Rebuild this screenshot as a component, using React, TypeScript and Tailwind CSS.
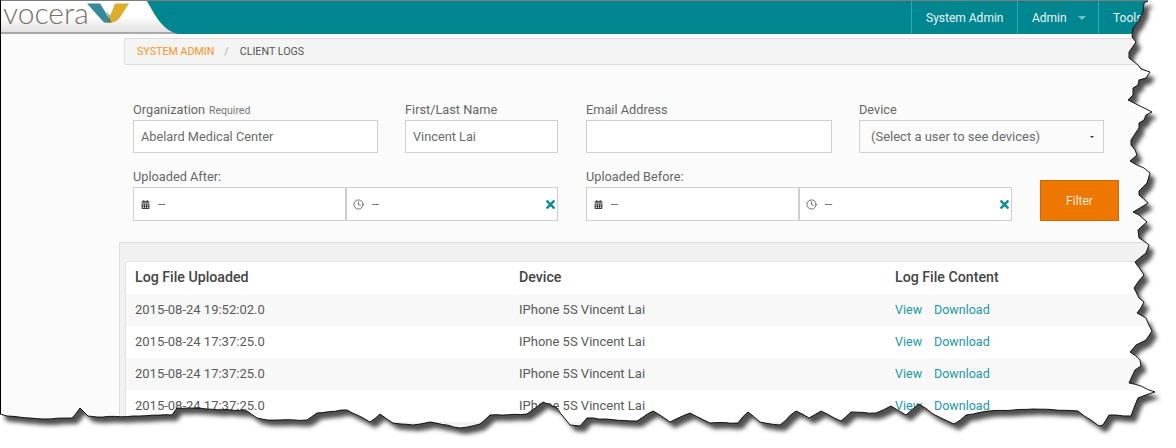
import React from "react";
import { Clock } from "lucide-react";
import { FaCalendarAlt, FaTimes } from "react-icons/fa";

const edge: [number, number][] = [
  [1148,1],[1144,3],[1143,12],[1138,22],[1133,28],[1132,37],[1136,42],[1129,52],[1129,58],[1138,65],[1141,69],[1150,72],[1146,78],[1139,80],[1138,85],[1133,88],[1133,95],[1128,100],[1138,105],[1152,112],[1146,115],[1144,120],[1139,123],[1139,128],[1131,140],[1131,145],[1135,150],[1137,155],[1130,161],[1144,168],[1150,173],[1147,183],[1139,191],[1139,195],[1148,203],[1133,212],[1139,215],[1147,222],[1138,230],[1139,238],[1149,245],[1146,253],[1135,262],[1144,275],[1134,288],[1139,298],[1144,302],[1137,313],[1146,318],[1152,331],[1146,340],[1136,345],[1130,352],[1140,360],[1141,366],[1135,370],[1129,383],[1141,386],[1155,392],[1138,398],[1131,416],[1116,415],[1109,415],[1103,425],[1099,426],[1091,420],[1078,411],[1033,409],[989,411],[966,415],[954,424],[933,414],[919,404],[906,415],[891,406],[876,413],[851,412],[841,421],[821,411],[809,418],[796,411],[780,425],[760,422],[748,412],[738,423],[710,423],[690,413],[670,422],[653,411],[637,421],[587,418],[580,426],[570,425],[557,408],[543,402],[527,414],[490,415],[480,424],[460,428],[430,422],[413,425],[393,423],[380,414],[370,422],[347,410],[317,413],[307,420],[267,420],[257,418],[247,411],[207,409],[177,408],[172,415],[133,416],[97,417],[88,416],[80,408],[72,418],[43,419],[7,416],[0,414],
];

function jagged(points: [number, number][]): string {
  const out: string[] = [];
  let seed = 7;
  const rnd = () => {
    seed = (seed * 9301 + 49297) % 233280;
    return seed / 233280 - 0.5;
  };
  points.forEach((p, i) => {
    out.push(`${p[0]},${p[1]}`);
    const n = points[i + 1];
    if (!n) return;
    const len = Math.hypot(n[0] - p[0], n[1] - p[1]);
    const steps = Math.floor(len / 6);
    for (let s = 1; s < steps; s++) {
      const t = s / steps;
      out.push(`${(p[0] + (n[0] - p[0]) * t + rnd() * 1).toFixed(1)},${(p[1] + (n[1] - p[1]) * t + rnd() * 1).toFixed(1)}`);
    }
  });
  return out.join(" ");
}

function TornEdge() {
  const line = jagged(edge);
  const outside = `1148,0 ${line} 0,448 1176,448 1176,0`;
  const page = `0,0 1148,0 ${line}`;
  return (
    <svg className="absolute left-0 top-0 pointer-events-none" width="1176" height="448" viewBox="0 0 1176 448">
      <defs>
        <filter id="torn-blur" x="-5%" y="-5%" width="110%" height="110%">
          <feGaussianBlur stdDeviation="2" />
        </filter>
        <clipPath id="torn-out">
          <polygon points={outside} />
        </clipPath>
      </defs>
      <polygon points={outside} fill="#ffffff" />
      <g clipPath="url(#torn-out)">
        <polygon points={page} fill="#4f4f4f" filter="url(#torn-blur)" transform="translate(5 6)" />
      </g>
      <polyline points={line} fill="none" stroke="#000" strokeWidth="0.9" />
      <path d="M0 0H1148M0.5 0V414" fill="none" stroke="#000" strokeWidth="1" />
    </svg>
  );
}

function Logo() {
  return (
    <div className="absolute left-0 top-0 w-[180px] h-[33px]">
      <svg className="absolute left-0 top-0" width="180" height="33" viewBox="0 0 180 33">
        <defs>
          <linearGradient id="logo-bg" x1="0" y1="0" x2="0" y2="1">
            <stop offset="0.45" stopColor="#ffffff" />
            <stop offset="0.94" stopColor="#e2e2e2" />
            <stop offset="0.95" stopColor="#a8a8a8" />
            <stop offset="1" stopColor="#a8a8a8" />
          </linearGradient>
        </defs>
        <path d="M0 0H147C155 14 162 29 178 33H0Z" fill="url(#logo-bg)" />
        <path d="M87 2.500H100L112 21.500H104Z" fill="#35899a" />
        <path d="M115 2.500H129L121 15Q117 21.500 111 21.500H105Q108 20 110 15Z" fill="#dcae2c" />
        <path d="M105 21.500Q108 20 110 15L106.500 10L111.500 21.500Z" fill="#5c7a6c" />
      </svg>
      <span className="absolute left-[3px] top-px text-[30px] leading-[20px] font-light text-[#7c7169] font-['Lato','Open_Sans',sans-serif]">vocera</span>
    </div>
  );
}

function NavItem({ label, caret, cls }: { label: string; caret?: boolean; cls: string }) {
  return (
    <div className={`h-full flex items-center pl-[14px] border-l border-[#23aeb5] text-[12px] text-[#e8f5f6] ${cls}`}>
      <span>{label}</span>
      {caret && <span className="ml-[11px] mt-[1px] w-0 h-0 border-x-[4px] border-x-transparent border-t-[4px] border-t-[#6fbfc5]" />}
    </div>
  );
}

function Field({ label, extra, value, cls }: { label: string; extra?: string; value?: string; cls: string }) {
  return (
    <div className={`flex flex-col ${cls}`}>
      <div className="h-[20px] text-[12.75px] leading-[20px] text-[#666]">
        {label}
        {extra && <span className="ml-[4px] text-[10.5px] text-[#777]">{extra}</span>}
      </div>
      <div className="h-[33px] bg-white border border-[#cfcfcf] flex items-center pl-[7px] text-[12.75px] text-[#6a6a6a]">{value}</div>
    </div>
  );
}

function DateBox({ icon, clear, gap, cls }: { icon: React.ReactNode; clear?: boolean; gap: string; cls: string }) {
  return (
    <div className={`h-[34px] bg-white border border-[#cfcfcf] flex items-center text-[13px] text-[#666] ${cls}`}>
      <span className="w-[11px] ml-[6px] flex justify-center text-[#3f3f3f]">{icon}</span>
      <span className={gap}>--</span>
      {clear && <FaTimes className="ml-auto text-[#0d8a94]" size={13} />}
    </div>
  );
}

function DateRange({ label, cls, last }: { label: string; cls: string; last: string }) {
  return (
    <div className={`flex flex-col ${cls}`}>
      <div className="h-[21px] text-[12.75px] leading-[22px] text-[#666]">{label}</div>
      <div className="flex">
        <DateBox cls="w-[213px]" gap="ml-[7px]" icon={<FaCalendarAlt size={9} />} />
        <DateBox cls={last} gap="ml-[8px]" clear icon={<Clock size={11} strokeWidth={1.6} />} />
      </div>
    </div>
  );
}

const rows = [
  "2015-08-24 19:52:02.0",
  "2015-08-24 17:37:25.0",
  "2015-08-24 17:37:25.0",
  "2015-08-24 17:37:25.0",
];

export default function App() {
  return (
    <div className="relative w-[1176px] h-[448px] overflow-hidden bg-white font-['Roboto','Liberation_Sans',sans-serif]">
      <div className="h-[448px] bg-[#fbfbfb] flex flex-col">
        <header className="relative h-[33px] mt-px shrink-0 bg-[#00868f] flex justify-end">
          <Logo />
          <NavItem label="System Admin" cls="w-[106px]" />
          <NavItem label="Admin" caret cls="w-[81px]" />
          <NavItem label="Tools" cls="w-[78px]" />
        </header>

        <nav className="ml-[124px] mt-[4px] h-[27px] shrink-0 bg-[#f4f4f4] border border-[#dedede] rounded-l-[2px] flex items-center pl-[12px] pt-px text-[10.7px] uppercase">
          <span className="text-[#f7921e]">System Admin</span>
          <span className="ml-[10px] mr-[11px] text-[#aaa]">/</span>
          <span className="text-[#555]">Client Logs</span>
        </nav>

        <form className="ml-[133px] mt-[35px] shrink-0">
          <div className="flex">
            <Field cls="w-[245px]" label="Organization" extra="Required" value="Abelard Medical Center" />
            <Field cls="w-[153px] ml-[27px]" label="First/Last Name" value="Vincent Lai" />
            <Field cls="w-[246px] ml-[28px]" label="Email Address" />
            <div className="w-[245px] ml-[27px] flex flex-col">
              <div className="h-[20px] text-[12.75px] leading-[20px] text-[#666]">Device</div>
              <div className="h-[33px] border border-[#cfcfcf] flex items-center pl-[11px] pr-[9px] pt-px text-[13px] text-[#6a6a6a]">
                <span>(Select a user to see devices)</span>
                <span className="ml-auto w-0 h-0 border-x-[2px] border-x-transparent border-t-[2px] border-t-[#333]" />
              </div>
            </div>
          </div>
          <div className="flex mt-[13px]">
            <DateRange cls="w-[425px]" last="w-[212px]" label="Uploaded After:" />
            <DateRange cls="w-[426px] ml-[28px]" last="w-[213px]" label="Uploaded Before:" />
            <button type="button" className="ml-[28px] mt-[-7px] h-[41px] w-[79px] self-end bg-[#ee7700] border border-[#c8690c] text-[12px] text-[#fdeedd]">Filter</button>
          </div>
        </form>

        <section className="ml-[119px] mt-[21px] flex-1 bg-[#f1f1f1] border-t border-l border-[#dcdcdc] pt-[18px] pl-[5px]">
          <div className="bg-white border-t border-l border-[#e2e2e2] text-[13px] text-[#5a5a5a]">
            <div className="h-[32px] flex items-center font-medium text-[#444] text-[14.2px]">
              <span className="w-[384px] pl-[9px]">Log File Uploaded</span>
              <span className="w-[376px] pl-[9px]">Device</span>
              <span className="pl-[9px]">Log File Content</span>
            </div>
            {rows.map((t, i) => (
              <div key={i} className={`h-[32px] flex items-center ${i % 2 === 0 ? "bg-[#f8f8f8]" : "bg-white"}`}>
                <span className="w-[384px] pl-[9px]">{t}</span>
                <span className="w-[376px] pl-[9px]">IPhone 5S Vincent Lai</span>
                <span className="pl-[9px] text-[12.5px] text-[#1a98a3]">
                  View<span className="ml-[12px]">Download</span>
                </span>
              </div>
            ))}
          </div>
        </section>
      </div>
      <TornEdge />
    </div>
  );
}
